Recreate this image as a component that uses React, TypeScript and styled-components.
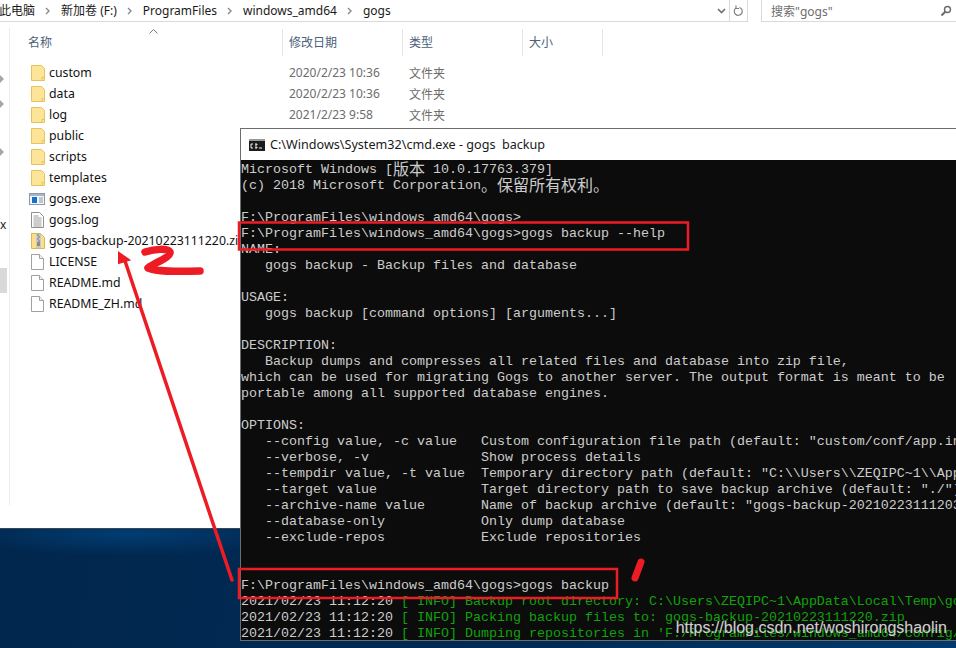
import { Fragment } from 'react'
import { createGlobalStyle, styled } from 'styled-components'

const GlobalStyle = createGlobalStyle`
  html, body { margin: 0; padding: 0; background: #fff; }
  body { width: 956px; height: 648px; overflow: hidden; font-family: "Noto Sans", "Noto Sans CJK SC", sans-serif; }
`

const Desktop = styled.div`
  position: relative;
  width: 956px;
  height: 648px;
  overflow: hidden;
  background: radial-gradient(ellipse 170px 22px at 130px 534px, #013d72 0%, rgba(1, 61, 114, 0) 100%),
    linear-gradient(100deg, #01264c 0%, #012a54 60%, #003a6e 100%);
`

const Explorer = styled.div`
  width: 956px;
  height: 529px;
  background: #fff;
  border-bottom: 1px solid #3a4654;
  box-sizing: border-box;
  display: flex;
  flex-direction: column;
`

const AddressRow = styled.div`
  height: 22px;
  display: flex;
  flex-shrink: 0;
`

const AddressBar = styled.div`
  width: 748px;
  box-sizing: border-box;
  border-bottom: 1px solid #d9d9d9;
  border-right: 1px solid #d9d9d9;
  display: flex;
  align-items: center;
  height: 22px;
  font-size: 12px;
  color: #1a1a1a;
  white-space: nowrap;
  overflow: hidden;
`

const Crumb = styled.span`
  line-height: 20px;
  &:first-child { margin-left: -1px; }
`

const Sep = styled.svg`
  width: 5px;
  height: 8px;
  margin: 0 11px 0 10px;
  flex-shrink: 0;
`

const AddressTools = styled.div`
  margin-left: auto;
  display: flex;
  align-items: center;
  gap: 3px;
  height: 21px;
`

const RefreshCell = styled.div`
  width: 17px;
  height: 21px;
  border-left: 1px solid #d9d9d9;
  display: flex;
  align-items: center;
  justify-content: center;
`

const SearchBox = styled.div`
  margin-left: 13px;
  width: 195px;
  height: 22px;
  box-sizing: border-box;
  border-left: 1px solid #d9d9d9;
  border-bottom: 1px solid #d9d9d9;
  display: flex;
  align-items: center;
  justify-content: space-between;
  padding: 0 4px 0 9px;
  font-size: 12px;
  color: #6d6d6d;
`

const Body = styled.div`
  flex: 1;
  display: flex;
  min-height: 0;
`

const NavPane = styled.div`
  width: 10px;
  height: 477px;
  margin-top: 6px;
  border-right: 1px solid #ececec;
  box-sizing: border-box;
  flex-shrink: 0;
  position: relative;
`

const NavArrow = styled.svg<{ $top: number }>`
  position: absolute;
  left: 0;
  top: ${p => p.$top}px;
  width: 4px;
  height: 8px;
`

const NavSelected = styled.div`
  position: absolute;
  left: 0;
  top: 240px;
  width: 7px;
  height: 25px;
  background: #d9d9d9;
`

const NavLabel = styled.span`
  position: absolute;
  left: 0;
  top: 189px;
  font-size: 12px;
  line-height: 16px;
  color: #1a1a1a;
`

const FileArea = styled.div`
  flex: 1;
  display: flex;
  flex-direction: column;
`

const HeaderRow = styled.div`
  display: flex;
  height: 27px;
  margin-top: 7px;
  position: relative;
`

const HeaderCell = styled.div<{ $w: number; $pad: number }>`
  width: ${p => p.$w}px;
  box-sizing: border-box;
  padding-left: ${p => p.$pad}px;
  font-size: 12px;
  line-height: 28px;
  color: #4c607a;
  border-right: 1px solid #e5e5e5;
`

const SortCaret = styled.svg`
  position: absolute;
  left: 139px;
  top: 0;
  width: 9px;
  height: 5px;
`

const FileList = styled.div`
  margin-top: 6px;
  display: flex;
  flex-direction: column;
`

const FileRow = styled.div`
  height: 21px;
  display: flex;
  align-items: center;
  white-space: nowrap;
  font-size: 12.3px;
  color: #111;
`

const IconCell = styled.div`
  width: 39px;
  padding-left: 21px;
  box-sizing: border-box;
  display: flex;
  align-items: center;
  flex-shrink: 0;
  height: 16px;
`

const WideIcon = styled.svg`
  width: 16px;
  height: 12px;
  margin-left: -2px;
  flex-shrink: 0;
`

const FileName = styled.span`
  width: 240px;
  flex-shrink: 0;
`

const FileMeta = styled.span<{ $w: number }>`
  width: ${p => p.$w}px;
  flex-shrink: 0;
  font-size: 12px;
  color: #6d6d6d;
`

const Terminal = styled.div`
  position: absolute;
  left: 240px;
  top: 128px;
  width: 740px;
  height: 513px;
  box-sizing: border-box;
  border: 1px solid #6d6d6d;
  border-right: none;
  background: #0c0c0c;
  display: flex;
  flex-direction: column;
  overflow: hidden;
`

const TitleBar = styled.div`
  height: 31px;
  background: #fff;
  display: flex;
  align-items: center;
  padding-left: 8px;
  gap: 5px;
  font-size: 12.6px;
  color: #1a1a1a;
  flex-shrink: 0;
  white-space: pre;
`

const Console = styled.pre`
  margin: 0;
  padding: 2px 0 0 0;
  font-family: "Liberation Mono", "Noto Sans CJK SC", monospace;
  font-size: 13.33px;
  line-height: 16px;
  color: #cccccc;
  white-space: pre;
`

const Wide = styled.span`
  font-family: "Noto Sans CJK SC", sans-serif;
  font-size: 16px;
  line-height: 0;
  vertical-align: -2px;
`

const Info = styled.span`
  color: #13a10e;
`

const Annotation = styled.svg`
  position: absolute;
  left: 0;
  top: 0;
  width: 956px;
  height: 648px;
  pointer-events: none;
`

const Watermark = styled.div`
  position: absolute;
  right: 9px;
  top: 619px;
  font-family: "Liberation Sans", sans-serif;
  font-size: 16px;
  line-height: 18px;
  color: #cfcfcf;
  text-shadow: 0 0 1px #333;
`

const folders = ['custom', 'data', 'log', 'public', 'scripts', 'templates']
const folderDates: Record<string, string> = {
  custom: '2020/2/23 10:36',
  data: '2020/2/23 10:36',
  log: '2021/2/23 9:58',
}
const crumbs = ['新加卷 (F:)', 'ProgramFiles', 'windows_amd64', 'gogs']

const FolderIcon = () => (
  <svg width="14" height="16" viewBox="0 0 14 16">
    <path d="M.5.500h10l3 3v12h-13z" fill="#fce596" stroke="#e6c35c" />
    <path d="M11 15.500v-3h2.500" fill="none" stroke="#e6c35c" />
  </svg>
)

const ExeIcon = () => (
  <WideIcon viewBox="0 0 16 12">
    <rect x=".5" y=".5" width="15" height="11" fill="#f3f5f8" stroke="#8d97a5" />
    <rect x="1" y="1" width="14" height="2" fill="#a9b6c8" />
    <rect x="3" y="4" width="5" height="6" fill="#1470c8" />
    <path d="M10 5h4M10 7h4M10 9h4" stroke="#8d97a5" />
  </WideIcon>
)

const LogIcon = () => (
  <svg width="13" height="16" viewBox="0 0 13 16">
    <path d="M.5.500h8l4 4v11h-12z" fill="#fff" stroke="#8f8f8f" />
    <path d="M2.500 4h5M2.500 6h8M2.500 8h8M2.500 10h8M2.500 12h8M2.500 14h8" stroke="#9a9a9a" />
  </svg>
)

const ZipIcon = () => (
  <svg width="14" height="16" viewBox="0 0 14 16">
    <path d="M.5.500h9l4 4v11h-13z" fill="#fbdf8c" stroke="#d9b655" />
    <rect x="5" y="1" width="5" height="14" fill="#c9c9c9" />
    <path d="M6 2h2M7 4h2M6 6h2M7 8h2" stroke="#777" />
    <rect x="6" y="9" width="3" height="4" fill="#8a8a8a" />
  </svg>
)

const BlankIcon = () => (
  <svg width="13" height="16" viewBox="0 0 13 16">
    <path d="M.5.500h8l4 4v11h-12z" fill="#fff" stroke="#a0a0a0" />
    <path d="M8.500.500v4h4" fill="#f2f2f2" stroke="#a0a0a0" />
  </svg>
)

const CmdIcon = () => (
  <svg width="16" height="12" viewBox="0 0 16 12">
    <rect width="16" height="12" fill="#1c1c1c" />
    <rect x="0" y="0" width="16" height="2" fill="#9a9a9a" />
    <path d="M2 5h2M2 5v4h2M6 5h2v1h-2M6 8h2v1h-2M10 9h3" stroke="#eee" fill="none" />
  </svg>
)

export default function App() {
  return (
    <Desktop>
      <GlobalStyle />
      <Explorer>
        <AddressRow>
          <AddressBar>
            <Crumb>此电脑</Crumb>
            {crumbs.map(c => (
              <Fragment key={c}>
                <Sep viewBox="0 0 5 8">
                  <path d="M1 1l3 3-3 3" fill="none" stroke="#8a8a8a" strokeWidth="1.400" />
                </Sep>
                <Crumb>{c}</Crumb>
              </Fragment>
            ))}
            <AddressTools>
              <svg width="9" height="6" viewBox="0 0 9 6">
                <path d="M1 1l3.500 3.500L8 1" fill="none" stroke="#707070" strokeWidth="1.600" />
              </svg>
              <RefreshCell>
                <svg width="11" height="12" viewBox="0 0 11 12">
                  <path d="M6.500 2.500a4 4 0 1 1-3.500.500M3 .5v3h3" fill="none" stroke="#808080" strokeWidth="1.200" />
                </svg>
              </RefreshCell>
            </AddressTools>
          </AddressBar>
          <SearchBox>
            <span>搜索"gogs"</span>
            <svg width="12" height="12" viewBox="0 0 12 12">
              <circle cx="7.500" cy="4.500" r="3" fill="none" stroke="#6a6a6a" strokeWidth="1.400" />
              <path d="M5.500 6.500L1.500 10.500" stroke="#6a6a6a" strokeWidth="2" />
            </svg>
          </SearchBox>
        </AddressRow>
        <Body>
          <NavPane>
            <NavArrow $top={47} viewBox="0 0 4 8"><path d="M0 0l4 4-4 4z" fill="#a6a6a6" /></NavArrow>
            <NavArrow $top={72} viewBox="0 0 4 8"><path d="M0 0l4 4-4 4z" fill="#a6a6a6" /></NavArrow>
            <NavArrow $top={120} viewBox="0 0 4 8"><path d="M0 0l4 4-4 4z" fill="#a6a6a6" /></NavArrow>
            <NavLabel>x</NavLabel>
            <NavSelected />
          </NavPane>
          <FileArea>
            <HeaderRow>
              <SortCaret viewBox="0 0 9 5"><path d="M.5 4.500l4-4 4 4" fill="none" stroke="#777" /></SortCaret>
              <HeaderCell $w={273} $pad={18}>名称</HeaderCell>
              <HeaderCell $w={120} $pad={6}>修改日期</HeaderCell>
              <HeaderCell $w={120} $pad={6}>类型</HeaderCell>
              <HeaderCell $w={80} $pad={6}>大小</HeaderCell>
            </HeaderRow>
            <FileList>
              {folders.map(f => (
                <FileRow key={f}>
                  <IconCell><FolderIcon /></IconCell>
                  <FileName>{f}</FileName>
                  <FileMeta $w={120}>{folderDates[f]}</FileMeta>
                  <FileMeta $w={60}>{folderDates[f] ? '文件夹' : ''}</FileMeta>
                </FileRow>
              ))}
              <FileRow><IconCell><ExeIcon /></IconCell><FileName>gogs.exe</FileName></FileRow>
              <FileRow><IconCell><LogIcon /></IconCell><FileName>gogs.log</FileName></FileRow>
              <FileRow><IconCell><ZipIcon /></IconCell><FileName>gogs-backup-20210223111220.zip</FileName></FileRow>
              <FileRow><IconCell><BlankIcon /></IconCell><FileName>LICENSE</FileName></FileRow>
              <FileRow><IconCell><BlankIcon /></IconCell><FileName>README.md</FileName></FileRow>
              <FileRow><IconCell><BlankIcon /></IconCell><FileName>README_ZH.md</FileName></FileRow>
            </FileList>
          </FileArea>
        </Body>
      </Explorer>

      <Terminal>
        <TitleBar><CmdIcon />{'C:\\Windows\\System32\\cmd.exe - gogs  backup'}</TitleBar>
        <Console>
          {'Microsoft Windows ['}<Wide>版本</Wide>{' 10.0.17763.379]\n'}
          {'(c) 2018 Microsoft Corporation'}<Wide>。保留所有权利。</Wide>{'\n\n'}
          {'F:\\ProgramFiles\\windows_amd64\\gogs>\n'}
          {'F:\\ProgramFiles\\windows_amd64\\gogs>gogs backup --help\n'}
          {'NAME:\n'}
          {'   gogs backup - Backup files and database\n\n'}
          {'USAGE:\n'}
          {'   gogs backup [command options] [arguments...]\n\n'}
          {'DESCRIPTION:\n'}
          {'   Backup dumps and compresses all related files and database into zip file,\n'}
          {'which can be used for migrating Gogs to another server. The output format is meant to be\n'}
          {'portable among all supported database engines.\n\n'}
          {'OPTIONS:\n'}
          {'   --config value, -c value   Custom configuration file path (default: "custom/conf/app.ini")\n'}
          {'   --verbose, -v              Show process details\n'}
          {'   --tempdir value, -t value  Temporary directory path (default: "C:\\\\Users\\\\ZEQIPC~1\\\\AppData")\n'}
          {'   --target value             Target directory path to save backup archive (default: "./")\n'}
          {'   --archive-name value       Name of backup archive (default: "gogs-backup-20210223111203.zip")\n'}
          {'   --database-only            Only dump database\n'}
          {'   --exclude-repos            Exclude repositories\n\n\n'}
          {'F:\\ProgramFiles\\windows_amd64\\gogs>gogs backup\n'}
          {'2021/02/23 11:12:20 '}<Info>{'[ INFO] Backup root directory: C:\\Users\\ZEQIPC~1\\AppData\\Local\\Temp\\gogs'}</Info>{'\n'}
          {'2021/02/23 11:12:20 '}<Info>{'[ INFO] Packing backup files to: gogs-backup-20210223111220.zip'}</Info>{'\n'}
          {'2021/02/23 11:12:20 '}<Info>{"[ INFO] Dumping repositories in 'F:/ProgramFiles/windows_amd64/config/"}</Info>
        </Console>
      </Terminal>

      <Annotation viewBox="0 0 956 648">
        <rect x="239" y="222.500" width="449" height="27" fill="none" stroke="#ed1c24" strokeWidth="2.500" />
        <rect x="239" y="569" width="378" height="29" fill="none" stroke="#ed1c24" strokeWidth="2.500" />
        <path d="M232 580L124 258" fill="none" stroke="#ed1c24" strokeWidth="3.500" strokeLinecap="round" />
        <path d="M119 263L119 253L129 260z" fill="#ed1c24" stroke="#ed1c24" strokeWidth="2" />
        <path d="M145 252C155 249 167 248 170 252C171 257 156 262 148 268C160 273 185 271 200 271" fill="none" stroke="#ed1c24" strokeWidth="7.500" strokeLinecap="round" strokeLinejoin="round" />
        <path d="M641 562L635 578" fill="none" stroke="#ed1c24" strokeWidth="7" strokeLinecap="round" />
      </Annotation>
      <Watermark>https://blog.csdn.net/woshirongshaolin</Watermark>
    </Desktop>
  )
}
